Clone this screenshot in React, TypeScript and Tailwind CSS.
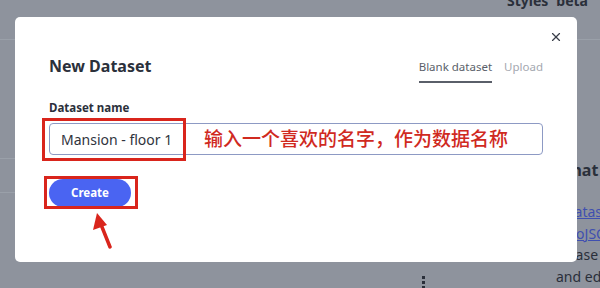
import { X } from 'lucide-react';

const font = { fontFamily: '"Noto Sans", "Noto Sans CJK SC", sans-serif' };

function Kebab() {
  return (
    <div className="flex flex-col gap-[2px]">
      <span className="block h-[3px] w-[3px] bg-[#2a2f3a]" />
      <span className="block h-[3px] w-[3px] bg-[#2a2f3a]" />
      <span className="block h-[3px] w-[3px] bg-[#2a2f3a]" />
    </div>
  );
}

function Background() {
  return (
    <div className="flex h-full flex-col">
      {/* top bar */}
      <div className="flex h-[40px] shrink-0 justify-end border-b border-[#9aa0a9] pr-[12px]">
        <div className="-mt-[10px] flex gap-[8px] text-[14px] font-bold text-[#2a2f3a]">
          <span>Styles</span>
          <span>beta</span>
        </div>
      </div>
      <div className="flex flex-1">
        {/* left list */}
        <div className="w-[16px] shrink-0">
          <div className="mt-[118px] h-[35px] border-y border-[#9aa0a9]" />
        </div>
        {/* middle */}
        <div className="flex flex-1 flex-col items-start pl-[406px] pt-[236px]">
          <Kebab />
        </div>
        {/* right info column */}
        <div className="w-[44px] shrink-0 overflow-hidden whitespace-nowrap pt-[119px] text-[14px] leading-[21.5px] text-[#2a2f3a]">
          <div className="mb-[20px] text-[16px] font-bold leading-[22px]">What is a dataset?</div>
          <div className="pl-[10px] text-[#3f4fb0] underline">datasets</div>
          <div className="pl-[2px] text-[#3f4fb0] underline">GeoJSON</div>
          <div className="pl-[11px]">base</div>
          <div>and edit</div>
        </div>
      </div>
    </div>
  );
}

export default function App() {
  return (
    <div className="relative h-[288px] w-[600px] overflow-hidden bg-[#8e939d]" style={font}>
      <Background />

      {/* modal */}
      <div className="absolute left-[15px] top-[17px] h-[245px] w-[562px] rounded-[5px] bg-white px-[34px] pt-[37px]">
        <button className="absolute right-[14px] top-[13px] text-[#3a3f4a]">
          <X size={14} strokeWidth={2} />
        </button>

        <div className="flex items-start justify-between">
          <h2 className="text-[16px] font-bold leading-[24px] text-[#2b303b]">New Dataset</h2>
          <div className="mt-[3px] flex gap-[12px] text-[11.5px] leading-[20px]">
            <span className="border-b-2 border-[#5a5f69] pb-[4px] text-[#5a5f69]">Blank dataset</span>
            <span className="text-[#a4a8b0]">Upload</span>
          </div>
        </div>

        <label className="mt-[17px] block text-[11.5px] font-bold leading-[16px] text-[#2b303b]">Dataset name</label>
        <div className="mt-[7px] flex h-[32px] items-center rounded-[4px] border border-[#8d9ac4] px-[11px] text-[14px] text-[#30343d]">
          Mansion - floor 1
        </div>

        <button className="mt-[24px] h-[28px] w-[82px] rounded-full bg-[#4a64f2] text-[11.5px] font-bold text-white">
          Create
        </button>
      </div>

      {/* annotations */}
      <div className="absolute left-[42px] top-[118px] h-[43px] w-[144px] border-[3px] border-[#d9251c]" />
      <div className="absolute left-[44px] top-[176px] h-[33px] w-[94px] border-[3px] border-[#d9251c]" />
      <div className="absolute left-[204px] top-[125px] text-[19px] font-medium leading-[28px] text-[#d02a1f]">
        输入一个喜欢的名字，作为数据名称
      </div>
      <svg className="absolute left-[88px] top-[208px]" width="30" height="44" viewBox="0 0 30 44">
        <line x1="22" y1="39" x2="12" y2="14" stroke="#d9251c" strokeWidth="3.5" strokeLinecap="round" />
        <polygon points="9,5 5,22 19,17" fill="#d9251c" />
      </svg>
    </div>
  );
}
